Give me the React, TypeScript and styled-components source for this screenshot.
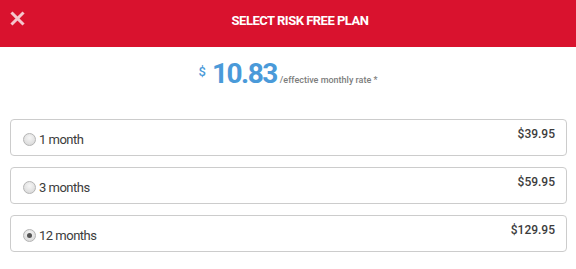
import React, { useState } from "react";
import styled, { createGlobalStyle } from "styled-components";

const GlobalStyle = createGlobalStyle`
  body {
    margin: 0;
    background: #ffffff;
    font-family: Roboto, "Liberation Sans", Arial, sans-serif;
  }
`;

interface Plan {
  label: string;
  price: string;
}

const PLANS: Plan[] = [
  { label: "1 month", price: "$39.95" },
  { label: "3 months", price: "$59.95" },
  { label: "12 months", price: "$129.95" },
];

const Modal = styled.div`
  width: 576px;
  height: 269px;
  background: #fff;
`;

const Header = styled.div`
  position: relative;
  height: 47px;
  background: #d9122e;
  display: flex;
  align-items: flex-start;
  justify-content: center;
  padding: 13px 0 0 24px;
  box-sizing: border-box;
`;

const CloseButton = styled.button`
  position: absolute;
  left: 9px;
  top: 10px;
  width: 17px;
  height: 17px;
  padding: 0;
  border: none;
  background: transparent;
  cursor: pointer;
  display: flex;
  align-items: center;
  justify-content: center;
`;

const Title = styled.h1`
  margin: 0;
  color: #fff;
  font-size: 13px;
  font-weight: 700;
  letter-spacing: -0.5px;
  line-height: 15px;
`;

const PriceRow = styled.div`
  display: flex;
  justify-content: center;
  align-items: baseline;
  padding-top: 12px;
  height: 48px;
  box-sizing: border-box;
  color: #4a9ad9;
`;

const Currency = styled.span`
  font-size: 13px;
  font-weight: 500;
  position: relative;
  top: -7px;
  margin-right: 6px;
`;

const Amount = styled.span`
  font-size: 28px;
  font-weight: 700;
  line-height: 30px;
  letter-spacing: -1.5px;
`;

const Note = styled.span`
  font-size: 9px;
  color: #7d7d7d;
  margin-left: 3px;
  font-weight: 500;
`;

const List = styled.div`
  display: flex;
  flex-direction: column;
  gap: 11px;
  padding: 24px 9px 0 10px;
`;

const Card = styled.label`
  display: flex;
  justify-content: space-between;
  height: 37px;
  box-sizing: border-box;
  border: 1px solid #cccccc;
  border-radius: 4px;
  padding: 7px 11px 0 12px;
  cursor: pointer;
`;

const Choice = styled.span`
  display: flex;
  align-items: center;
  margin-top: 5px;
  height: 14px;
  font-size: 13px;
  letter-spacing: -0.5px;
  color: #3c3c3c;
`;

const Radio = styled.span<{ $checked: boolean }>`
  width: 11px;
  height: 11px;
  border-radius: 50%;
  border: 1px solid #b4b4b4;
  background: radial-gradient(circle at 50% 35%, #f6f6f6, #d4d4d4);
  margin-right: 3px;
  display: flex;
  align-items: center;
  justify-content: center;
  &::after {
    content: "";
    display: ${(p) => (p.$checked ? "block" : "none")};
    width: 5px;
    height: 5px;
    border-radius: 50%;
    background: #555;
  }
`;

const Price = styled.span`
  font-size: 12px;
  font-weight: 500;
  color: #3c3c3c;
  line-height: 14px;
`;

export default function App(): React.ReactElement {
  const [selected, setSelected] = useState<number>(2);

  return (
    <>
      <GlobalStyle />
      <Modal>
        <Header>
          <CloseButton aria-label="close">
            <svg width="15" height="15" viewBox="0 0 15 15">
              <path
                d="M2.5 2.5 L12.5 12.5 M12.5 2.5 L2.5 12.5"
                stroke="#f4c6cd"
                strokeWidth="3"
                strokeLinecap="square"
              />
            </svg>
          </CloseButton>
          <Title>SELECT RISK FREE PLAN</Title>
        </Header>
        <PriceRow>
          <Currency>$</Currency>
          <Amount>10.83</Amount>
          <Note>/effective monthly rate *</Note>
        </PriceRow>
        <List>
          {PLANS.map((plan, index) => (
            <Card key={plan.label} onClick={() => setSelected(index)}>
              <Choice>
                <Radio $checked={selected === index} />
                {plan.label}
              </Choice>
              <Price>{plan.price}</Price>
            </Card>
          ))}
        </List>
      </Modal>
    </>
  );
}
